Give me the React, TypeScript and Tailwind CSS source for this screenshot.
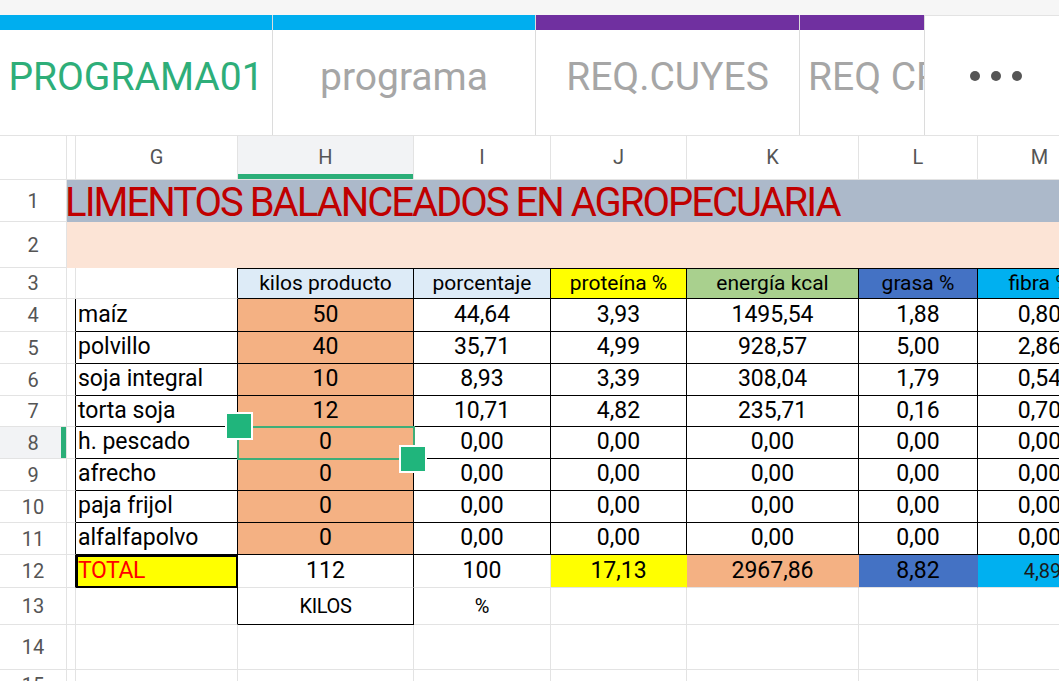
import clsx from "clsx";

const GRID = "border-[#e3e3e3]";

interface Col {
  key: string;
  w: string;
}

const COLS: Col[] = [
  { key: "G", w: "w-[162px]" },
  { key: "H", w: "w-[176px]" },
  { key: "I", w: "w-[137px]" },
  { key: "J", w: "w-[136px]" },
  { key: "K", w: "w-[172px]" },
  { key: "L", w: "w-[119px]" },
  { key: "M", w: "w-[124px]" },
];

const HEADERS = [
  { text: "kilos producto", bg: "bg-[#ddebf7]" },
  { text: "porcentaje", bg: "bg-[#ddebf7]" },
  { text: "proteína %", bg: "bg-[#ffff00]" },
  { text: "energía kcal", bg: "bg-[#a9d08e]" },
  { text: "grasa %", bg: "bg-[#4472c4]" },
  { text: "fibra %", bg: "bg-[#00b0f0]" },
];

const ITEMS: { row: number; h: string; cells: string[] }[] = [
  { row: 4, h: "h-[33px]", cells: ["maíz", "50", "44,64", "3,93", "1495,54", "1,88", "0,80"] },
  { row: 5, h: "h-[32px]", cells: ["polvillo", "40", "35,71", "4,99", "928,57", "5,00", "2,86"] },
  { row: 6, h: "h-[32px]", cells: ["soja integral", "10", "8,93", "3,39", "308,04", "1,79", "0,54"] },
  { row: 7, h: "h-[31px]", cells: ["torta soja", "12", "10,71", "4,82", "235,71", "0,16", "0,70"] },
  { row: 8, h: "h-[32px]", cells: ["h. pescado", "0", "0,00", "0,00", "0,00", "0,00", "0,00"] },
  { row: 9, h: "h-[32px]", cells: ["afrecho", "0", "0,00", "0,00", "0,00", "0,00", "0,00"] },
  { row: 10, h: "h-[32px]", cells: ["paja frijol", "0", "0,00", "0,00", "0,00", "0,00", "0,00"] },
  { row: 11, h: "h-[32px]", cells: ["alfalfapolvo", "0", "0,00", "0,00", "0,00", "0,00", "0,00"] },
];

const TOTALS = [
  { text: "112", bg: "bg-white", edge: "border-r-black" },
  { text: "100", bg: "bg-white", edge: "" },
  { text: "17,13", bg: "bg-[#ffff00]", edge: "border-r-[#ffff00]" },
  { text: "2967,86", bg: "bg-[#f4b183]", edge: "border-r-[#f4b183]" },
  { text: "8,82", bg: "bg-[#4472c4]", edge: "border-r-[#4472c4]" },
  { text: "4,89", bg: "bg-[#00b0f0]", edge: "border-r-[#00b0f0]" },
];

function RowNum({ n, active }: { n?: number; active?: boolean }) {
  return (
    <div
      className={clsx(
        "relative flex h-full w-[67px] shrink-0 items-center justify-center border-r border-b text-[20px] text-[#555]",
        GRID,
        active ? "bg-[#f2f3f5]" : "bg-white"
      )}
    >
      {n}
      {active && <span className="absolute top-0 right-0 h-full w-[5px] bg-[#2bae78]" />}
    </div>
  );
}

function Gap({ edge }: { edge?: string }) {
  return <div className={clsx("h-full w-[9px] shrink-0 border-r border-b", GRID, edge)} />;
}

function Tabs() {
  const tabs = [
    { label: "PROGRAMA01", w: "w-[273px]", bar: "bg-[#00aeef]", text: "text-[#2eae79]", just: "justify-center" },
    { label: "programa", w: "w-[263px]", bar: "bg-[#00aeef]", text: "text-[#a6a6a6]", just: "justify-center" },
    { label: "REQ.CUYES", w: "w-[264px]", bar: "bg-[#7030a0]", text: "text-[#a6a6a6]", just: "justify-center" },
    { label: "REQ CRIANZA", w: "w-[125px]", bar: "bg-[#7030a0]", text: "text-[#a6a6a6]", just: "justify-start pl-[8px]" },
  ];
  return (
    <div className="flex h-[135px] flex-col bg-[#f6f6f6]">
      <div className="h-[15px] shrink-0" />
      <div className="flex flex-1">
        {tabs.map((t) => (
          <div key={t.label} className={clsx("flex shrink-0 flex-col border-r border-[#dcdcdc] bg-white", t.w)}>
            <div className={clsx("h-[15px] shrink-0", t.bar)} />
            <div
              className={clsx(
                "flex flex-1 items-center overflow-hidden whitespace-nowrap pb-[10px] text-[39px] leading-none",
                t.just,
                t.text
              )}
            >
              {t.label}
            </div>
          </div>
        ))}
        <div className="flex flex-1 items-center justify-center gap-[11px] border-t border-[#e3e3e3] bg-white pl-[8px]">
          <span className="h-[10px] w-[10px] rounded-full bg-[#555]" />
          <span className="h-[10px] w-[10px] rounded-full bg-[#555]" />
          <span className="h-[10px] w-[10px] rounded-full bg-[#555]" />
        </div>
      </div>
    </div>
  );
}

function ColumnHeader() {
  return (
    <div className={clsx("flex h-[45px] border-t bg-white", GRID)}>
      <RowNum />
      <Gap />
      {COLS.map((c) => (
        <div
          key={c.key}
          className={clsx(
            "relative flex h-full shrink-0 items-center justify-center border-r border-b pb-[2px] text-[20px] text-[#555]",
            GRID,
            c.w,
            c.key === "H" ? "bg-[#f2f3f5]" : "bg-white"
          )}
        >
          {c.key}
          {c.key === "H" && <span className="absolute bottom-0 left-0 h-[5px] w-full bg-[#2bae78]" />}
        </div>
      ))}
    </div>
  );
}

export default function App() {
  return (
    <div className="h-[681px] w-[1059px] overflow-hidden bg-white font-['Roboto',sans-serif] text-black">
      <Tabs />
      <ColumnHeader />

      {/* row 1: merged title */}
      <div className="flex h-[42px]">
        <RowNum n={1} />
        <div className="flex flex-1 items-center overflow-hidden whitespace-nowrap bg-[#acb9ca] pt-[3px]">
          <span className="-ml-[26px] text-[40px] leading-none tracking-[-0.05em] text-[#c00000]">
            ALIMENTOS BALANCEADOS EN AGROPECUARIA
          </span>
        </div>
      </div>

      {/* row 2 */}
      <div className="flex h-[46px]">
        <RowNum n={2} />
        <div className="flex-1 bg-[#fce4d6]" />
      </div>

      {/* row 3: headers */}
      <div className="flex h-[31px]">
        <RowNum n={3} />
        <Gap />
        <div className={clsx("h-full w-[162px] shrink-0 border-r border-b border-r-black", GRID)} />
        {HEADERS.map((h, i) => (
          <div
            key={h.text}
            className={clsx(
              "flex h-full shrink-0 items-center justify-center overflow-hidden whitespace-nowrap border-t border-r border-b border-black text-[21px]",
              COLS[i + 1].w,
              h.bg
            )}
          >
            {h.text}
          </div>
        ))}
      </div>

      {ITEMS.map((it) => (
        <div key={it.row} className={clsx("relative flex", it.h)}>
          <RowNum n={it.row} active={it.row === 8} />
          <Gap edge="border-r-black" />
          {it.cells.map((v, i) => (
            <div
              key={i}
              className={clsx(
                "flex h-full shrink-0 items-center overflow-hidden whitespace-nowrap border-r border-b border-black text-[23px]",
                COLS[i].w,
                i === 0 ? "justify-start pl-[2px]" : "justify-center",
                i === 1 ? "bg-[#f4b183]" : "bg-white"
              )}
            >
              {v}
            </div>
          ))}
          {it.row === 8 && (
            <>
              <div className="absolute top-[-1px] left-[237px] z-10 h-[34px] w-[178px] border-2 border-[#3fae78]" />
              <div className="absolute top-[-15px] left-[225px] z-10 h-[28px] w-[28px] border-2 border-white bg-[#20b57c]" />
              <div className="absolute top-[18px] left-[399px] z-10 h-[28px] w-[28px] border-2 border-white bg-[#20b57c]" />
            </>
          )}
        </div>
      ))}

      {/* row 12: totals */}
      <div className="flex h-[33px]">
        <RowNum n={12} />
        <Gap edge="border-r-black" />
        <div className="flex h-full w-[162px] shrink-0 items-center bg-[#ffff00] pl-[2px] text-[23px] tracking-[-0.02em] text-[#ff0000] shadow-[inset_0_0_0_2px_#000]">
          TOTAL
        </div>
        {TOTALS.map((t, i) => (
          <div
            key={t.text}
            className={clsx(
              "flex h-full shrink-0 items-center justify-center overflow-hidden whitespace-nowrap border-r border-b",
              GRID,
              COLS[i + 1].w,
              t.bg,
              t.edge,
              i === 5 ? "pl-[6px] text-[20px] text-[#1a1a1a]" : "text-[23px]"
            )}
          >
            {t.text}
          </div>
        ))}
      </div>

      {/* row 13 */}
      <div className="flex h-[37px]">
        <RowNum n={13} />
        <Gap />
        <div className={clsx("h-full w-[162px] shrink-0 border-r border-b border-r-black", GRID)} />
        <div className="flex h-full w-[176px] shrink-0 items-center justify-center border-r border-b border-black text-[20px] tracking-[-0.02em]">
          KILOS
        </div>
        <div className={clsx("flex h-full w-[137px] shrink-0 items-center justify-center border-r border-b text-[20px]", GRID)}>
          %
        </div>
        {COLS.slice(3).map((c) => (
          <div key={c.key} className={clsx("h-full shrink-0 border-r border-b", GRID, c.w)} />
        ))}
      </div>

      {/* rows 14-15 */}
      {[
        { n: 14, h: "h-[45px]" },
        { n: 15, h: "h-[30px]" },
      ].map((r) => (
        <div key={r.n} className={clsx("flex", r.h)}>
          <RowNum n={r.n} />
          <Gap />
          {COLS.map((c) => (
            <div key={c.key} className={clsx("h-full shrink-0 border-r border-b", GRID, c.w)} />
          ))}
        </div>
      ))}
    </div>
  );
}
